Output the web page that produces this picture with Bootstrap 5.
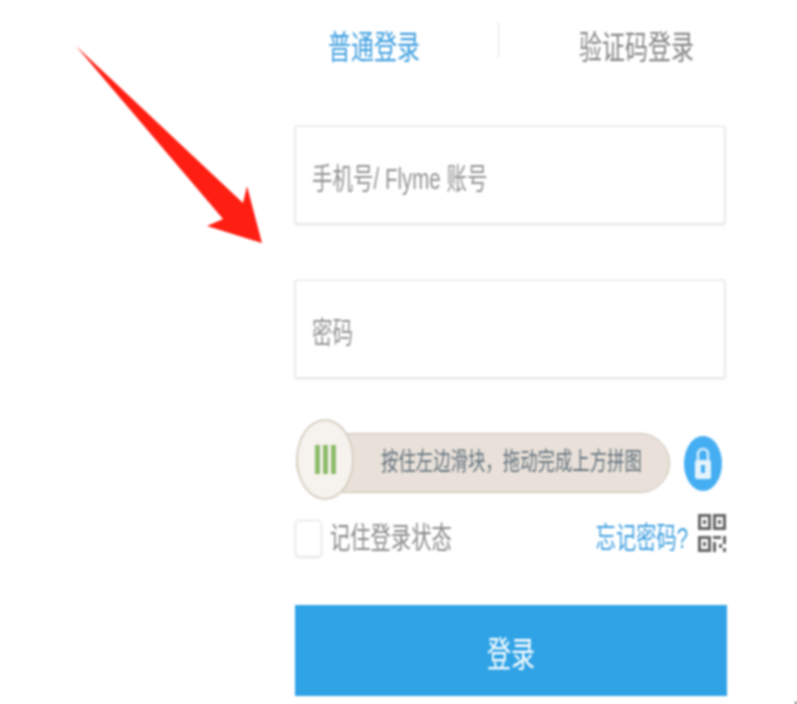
<!DOCTYPE html>
<html lang="zh">
<head>
<meta charset="utf-8">
<title>登录</title>
<link href="https://cdn.jsdelivr.net/npm/bootstrap@5.3.0/dist/css/bootstrap.min.css" rel="stylesheet">
<style>
html,body{height:100%;background:#fff;overflow:hidden}
body{font-family:"Liberation Sans","Noto Sans CJK SC",sans-serif}
.stage{position:relative;width:797px;height:704px;filter:blur(1.1px);overflow:hidden}
.arrow-mark{position:absolute;left:0;top:0}
.end-dot{position:absolute;left:795px;top:702px;width:2px;height:2px;background:#333}
.login-col{margin-left:295px;width:432px;padding-top:22px}
.tall{display:inline-block;transform:scaleY(1.45);line-height:1}
.tab-bar{height:36px;margin-bottom:68px}
.tab-one{width:158px;font-size:23px;color:#3f9fe0;padding-top:16px}
.tab-sep{width:1px;height:36px;background:#e2e2e2;margin-left:45px;margin-right:80px}
.tab-two{font-size:23px;color:#858585;white-space:nowrap;padding-top:16px}
.field{width:430px;height:98px;border:1px solid #e4e4e4;box-shadow:0 1px 3px rgba(0,0,0,.12);padding-left:16px;padding-top:8px;font-size:20.5px;color:#939393;margin-bottom:56px;background:#fff;white-space:nowrap}
.slide-row{height:80px;margin-top:-11px;margin-left:1px}
.slide-track{width:374px;height:60px;background:#e9e1d9;border:1px solid #c9bfb0;border-radius:30px;font-size:17.4px;color:#62727e;padding-left:84px;white-space:nowrap;position:relative}
.slide-knob{position:absolute;left:-1px;top:-15px;width:58px;height:81px;border-radius:50%;background:#f6f3ee;border:2px solid #d8d0c4;gap:3px}
.knob-bar{width:5px;height:29px;background:#8dbb6a}
.lock-oval{width:38px;height:55px;border-radius:50%;background:#45aef2;margin-left:14px}
.opts-row{height:48px;margin-top:11px}
.tick-box{width:27px;height:37px;border:1px solid #dedede;border-radius:4px;box-shadow:0 1px 2px rgba(0,0,0,.08);background:#fff;margin-right:8px;flex:none}
.remember{font-size:20.3px;color:#8a8a8a;white-space:nowrap}
.forgot{font-size:20.3px;color:#3f9fe0;white-space:nowrap;text-decoration:none;margin-left:auto}
.qr-mark{margin-left:10px;flex:none;margin-right:1px;margin-bottom:10px}
.go-btn{width:432px;height:91px;background:#30a3e6;color:#fff;font-size:24px;border:0;border-radius:0;margin-top:43px;padding:8px 0 0}
.go-btn:hover{background:#30a3e6;color:#fff}
</style>
</head>
<body>
<div class="stage">
  <svg class="arrow-mark" width="300" height="260" viewBox="0 0 300 260" aria-hidden="true">
    <polygon points="76,46 243,203 247,186 262,243 207,226 223,219" fill="#ff1e12"/>
  </svg>
  <div class="login-col">
    <div class="tab-bar d-flex align-items-center">
      <div class="tab-one text-center"><span class="tall">普通登录</span></div>
      <div class="tab-sep"></div>
      <div class="tab-two"><span class="tall">验证码登录</span></div>
    </div>
    <div class="field d-flex align-items-center"><span class="tall">手机号/ Flyme 账号</span></div>
    <div class="field d-flex align-items-center"><span class="tall">密码</span></div>
    <div class="slide-row d-flex align-items-center">
      <div class="slide-track d-flex align-items-center">
        <div class="slide-knob d-flex align-items-center justify-content-center">
          <i class="knob-bar"></i><i class="knob-bar"></i><i class="knob-bar"></i>
        </div>
        <span class="tall">按住左边滑块，拖动完成上方拼图</span>
      </div>
      <div class="lock-oval d-flex align-items-center justify-content-center">
        <svg width="20" height="34" viewBox="0 0 20 34" aria-hidden="true">
          <path d="M5 15V8a5 5 0 0 1 10 0v7" fill="none" stroke="#d6ecfb" stroke-width="2.6"/>
          <rect x="2" y="14" width="16" height="19" rx="2" fill="#e6f4fd"/>
          <rect x="8" y="19" width="4" height="8" fill="#45aef2"/>
        </svg>
      </div>
    </div>
    <div class="opts-row d-flex align-items-center">
      <div class="tick-box"></div>
      <span class="remember"><span class="tall">记住登录状态</span></span>
      <a href="#" class="forgot"><span class="tall">忘记密码?</span></a>
      <svg class="qr-mark" width="28" height="38" viewBox="0 0 28 38" aria-hidden="true">
        <g fill="none" stroke="#666" stroke-width="3">
          <rect x="1.5" y="1.5" width="10" height="13"/>
          <rect x="16.5" y="1.5" width="10" height="13"/>
          <rect x="1.5" y="23.5" width="10" height="13"/>
        </g>
        <g fill="#666">
          <rect x="5" y="6" width="3" height="4"/>
          <rect x="20" y="6" width="3" height="4"/>
          <rect x="5" y="28" width="3" height="4"/>
          <rect x="15" y="22" width="8" height="3"/>
          <rect x="25" y="22" width="3" height="8"/>
          <rect x="15" y="28" width="3" height="10"/>
          <rect x="21" y="30" width="3" height="4"/>
          <rect x="25" y="34" width="3" height="4"/>
        </g>
      </svg>
    </div>
    <button type="button" class="btn go-btn d-block"><span class="tall">登录</span></button>
  </div>
  <span class="end-dot"></span>
</div>
<script src="https://cdn.jsdelivr.net/npm/bootstrap@5.3.0/dist/js/bootstrap.bundle.min.js"></script>
</body>
</html>
